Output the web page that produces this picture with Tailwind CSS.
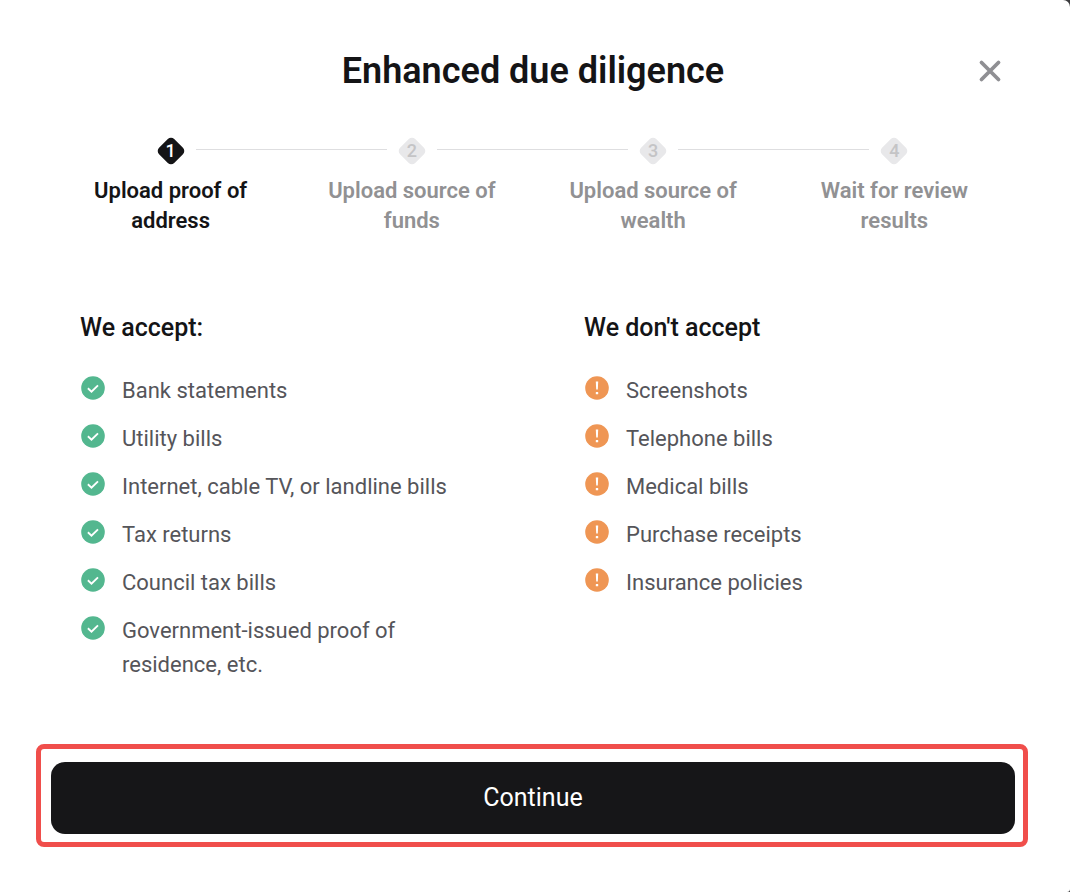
<!DOCTYPE html>
<html lang="en">
<head>
    <meta charset="UTF-8">
    <meta name="viewport" content="width=device-width, initial-scale=1.0">
    <title>Enhanced due diligence</title>
    <script src="https://cdn.jsdelivr.net/npm/@tailwindcss/browser@4"></script>
</head>
<body class="bg-[#3c3c3e] font-[Roboto,sans-serif] text-[#141416]">

    <!-- Shared icons -->
    <svg class="hidden">
        <symbol id="icon-check" viewBox="0 0 24 24">
            <circle cx="12" cy="12" r="11.8" fill="#53b78f"/>
            <path d="M7.6 12.9l2.9 2.8 5.8-5.7" fill="none" stroke="#fff" stroke-width="1.9" stroke-linecap="square"/>
        </symbol>
        <symbol id="icon-warn" viewBox="0 0 24 24">
            <circle cx="12" cy="12" r="11.8" fill="#ef9654"/>
            <path d="M10.8 5.6h2.4l-.4 8h-1.6z" fill="#fff"/>
            <rect x="10.8" y="15.9" width="2.4" height="2.4" rx=".4" fill="#fff"/>
        </symbol>
        <symbol id="icon-diamond" viewBox="0 0 28 28">
            <rect x="3.3" y="3.3" width="21.4" height="21.4" rx="4.5" transform="rotate(45 14 14)" fill="currentColor"/>
        </symbol>
    </svg>

    <main class="min-h-screen bg-white rounded-tr-[7px] rounded-br-[3px] pt-[49px] pb-11">
        <!-- Header -->
        <header class="relative pl-[51px] pr-[55px]">
            <h1 class="text-center text-[36px] leading-[44px] font-semibold">Enhanced due diligence</h1>
            <button type="button" aria-label="Close" class="absolute right-[68px] top-[10px] w-6 h-6 text-[#8f8f93]">
                <svg viewBox="0 0 24 24" class="w-6 h-6" fill="none" stroke="currentColor" stroke-width="3.8" stroke-linecap="round"><path d="M3.5 3.5l17 17M20.5 3.5l-17 17"/></svg>
            </button>
        </header>

        <!-- Steps -->
        <ol class="grid grid-cols-4 mt-11 pl-[50px] pr-[55px] text-center text-[22px] leading-[30px] font-semibold text-[#919193]">
            <li class="relative text-[#141416]">
                <div class="relative mx-auto w-7 h-7">
                    <svg class="w-7 h-7"><use href="#icon-diamond"/></svg>
                    <span class="absolute inset-0 text-[18px] leading-[28px] font-medium text-white">1</span>
                </div>
                <div class="absolute top-3 left-1/2 w-full px-[25px]"><div class="h-px bg-[#dedee0]"></div></div>
                <p class="mt-[11px] px-9">Upload proof of address</p>
            </li>
            <li class="relative">
                <div class="relative mx-auto w-7 h-7 text-[#e8e8ea]">
                    <svg class="w-7 h-7"><use href="#icon-diamond"/></svg>
                    <span class="absolute inset-0 text-[18px] leading-[28px] font-medium text-[#c4c4c6]">2</span>
                </div>
                <div class="absolute top-3 left-1/2 w-full px-[25px]"><div class="h-px bg-[#dedee0]"></div></div>
                <p class="mt-[11px] px-9">Upload source of funds</p>
            </li>
            <li class="relative">
                <div class="relative mx-auto w-7 h-7 text-[#e8e8ea]">
                    <svg class="w-7 h-7"><use href="#icon-diamond"/></svg>
                    <span class="absolute inset-0 text-[18px] leading-[28px] font-medium text-[#c4c4c6]">3</span>
                </div>
                <div class="absolute top-3 left-1/2 w-full px-[25px]"><div class="h-px bg-[#dedee0]"></div></div>
                <p class="mt-[11px] px-9">Upload source of wealth</p>
            </li>
            <li class="relative">
                <div class="relative mx-auto w-7 h-7 text-[#e8e8ea]">
                    <svg class="w-7 h-7"><use href="#icon-diamond"/></svg>
                    <span class="absolute inset-0 text-[18px] leading-[28px] font-medium text-[#c4c4c6]">4</span>
                </div>
                <p class="mt-[11px] px-9">Wait for review results</p>
            </li>
        </ol>

        <!-- Accepted / not accepted documents -->
        <div class="grid grid-cols-2 gap-x-[102px] mt-[76px] pl-20 pr-[84px]">
            <section>
                <h2 class="text-[25px] leading-8 font-medium">We accept:</h2>
                <ul class="mt-[30px] space-y-[14px] text-[22px] leading-[34px] text-[#55555a]">
                    <li class="flex gap-4"><svg class="shrink-0 w-[26px] h-6 mt-[2px]"><use href="#icon-check"/></svg>Bank statements</li>
                    <li class="flex gap-4"><svg class="shrink-0 w-[26px] h-6 mt-[2px]"><use href="#icon-check"/></svg>Utility bills</li>
                    <li class="flex gap-4"><svg class="shrink-0 w-[26px] h-6 mt-[2px]"><use href="#icon-check"/></svg>Internet, cable TV, or landline bills</li>
                    <li class="flex gap-4"><svg class="shrink-0 w-[26px] h-6 mt-[2px]"><use href="#icon-check"/></svg>Tax returns</li>
                    <li class="flex gap-4"><svg class="shrink-0 w-[26px] h-6 mt-[2px]"><use href="#icon-check"/></svg>Council tax bills</li>
                    <li class="flex gap-4"><svg class="shrink-0 w-[26px] h-6 mt-[2px]"><use href="#icon-check"/></svg>Government-issued proof of residence, etc.</li>
                </ul>
            </section>
            <section>
                <h2 class="text-[25px] leading-8 font-medium">We don't accept</h2>
                <ul class="mt-[30px] space-y-[14px] text-[22px] leading-[34px] text-[#55555a]">
                    <li class="flex gap-4"><svg class="shrink-0 w-[26px] h-6 mt-[2px]"><use href="#icon-warn"/></svg>Screenshots</li>
                    <li class="flex gap-4"><svg class="shrink-0 w-[26px] h-6 mt-[2px]"><use href="#icon-warn"/></svg>Telephone bills</li>
                    <li class="flex gap-4"><svg class="shrink-0 w-[26px] h-6 mt-[2px]"><use href="#icon-warn"/></svg>Medical bills</li>
                    <li class="flex gap-4"><svg class="shrink-0 w-[26px] h-6 mt-[2px]"><use href="#icon-warn"/></svg>Purchase receipts</li>
                    <li class="flex gap-4"><svg class="shrink-0 w-[26px] h-6 mt-[2px]"><use href="#icon-warn"/></svg>Insurance policies</li>
                </ul>
            </section>
        </div>

        <!-- Continue -->
        <div class="mt-[62px] ml-9 mr-[42px] rounded-[8px] border-5 border-[#f04e4b] pt-[13px] pb-2 pl-[10px] pr-2">
            <button type="button" class="block w-full h-[72px] rounded-[14px] bg-[#161618] text-[25px] leading-8 text-white">Continue</button>
        </div>
    </main>

</body>
</html>
